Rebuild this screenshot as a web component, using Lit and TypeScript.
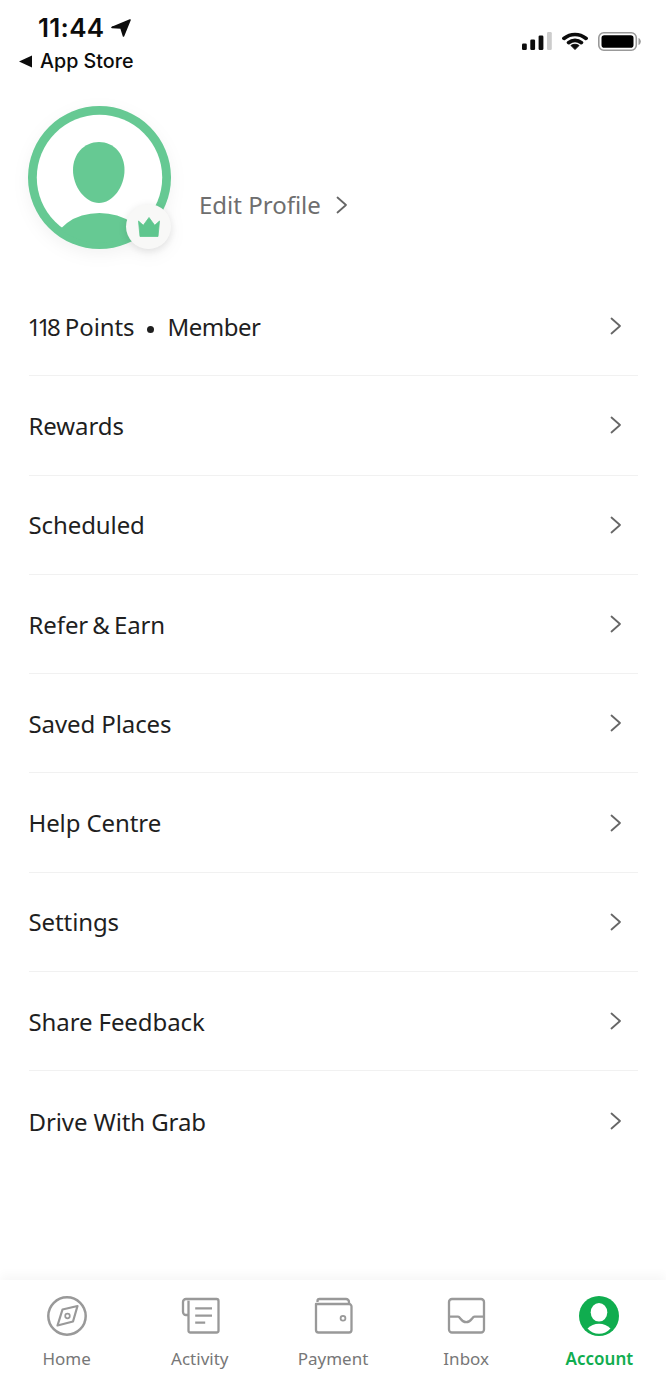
import { LitElement, html, css, svg } from "lit";
import { customElement } from "lit/decorators.js";

const rows = ["Rewards", "Scheduled", "Refer & Earn", "Saved Places", "Help Centre", "Settings", "Share Feedback", "Drive With Grab"];

const chev = html`<svg class="chev" width="12" height="18" viewBox="0 0 12 18"><path d="M1.5 1.5 10 9l-8.500 7.500" fill="none" stroke="#666" stroke-width="1.800" stroke-linecap="round" stroke-linejoin="round"/></svg>`;

const tabIcons: Record<string, unknown> = {
  Home: svg`<circle cx="22" cy="21" r="18.700" fill="none" stroke="#999" stroke-width="2.500"/><path d="M32.500 11 28 26.500 12.500 30.500 17.500 14.500Z" fill="none" stroke="#999" stroke-width="2.200" stroke-linejoin="round"/><circle cx="22.500" cy="21" r="2.300" fill="none" stroke="#999" stroke-width="1.700"/>`,
  Activity: svg`<path d="M9 4H38.500a2 2 0 0 1 2 2V35.500a2 2 0 0 1-2 2H12.500a2 2 0 0 1-2-2V6M10.500 20H8a3 3 0 0 1-3-3V7a3 3 0 0 1 3-3h1a1.500 1.500 0 0 1 1.500 1.500" fill="none" stroke="#999" stroke-width="2.300" stroke-linejoin="round"/><path d="M17.200 13.300H34M17.200 20.700H34M17.200 27.700H27.200" fill="none" stroke="#999" stroke-width="2.300"/>`,
  Payment: svg`<path d="M6.500 7V6a2 2 0 0 1 2-2H35a3 3 0 0 1 3 3V8.500" fill="none" stroke="#999" stroke-width="2.300"/><path d="M5 9H38a2.500 2.500 0 0 1 2.500 2.500V35a2.500 2.500 0 0 1-2.500 2.500H7.500A2.500 2.500 0 0 1 5 35Z" fill="none" stroke="#999" stroke-width="2.300" stroke-linejoin="round"/><circle cx="32" cy="23.300" r="2.400" fill="none" stroke="#999" stroke-width="1.800"/>`,
  Inbox: svg`<rect x="5" y="4" width="35" height="33.500" rx="3" fill="none" stroke="#999" stroke-width="2.300"/><path d="M5 21.700H14c2.500 0 3 5.500 8.200 5.500S28 21.700 30.500 21.700H40" fill="none" stroke="#999" stroke-width="2.300"/>`,
  Account: svg`<circle cx="22" cy="21" r="20" fill="#10ad4f"/><ellipse cx="22" cy="17.300" rx="8.300" ry="9.300" fill="#fff"/><path d="M10.500 33.500c3-3 7-4.700 11.500-4.700s8.500 1.700 11.500 4.700c-3 3.500-7 5.300-11.500 5.300s-8.500-1.800-11.500-5.300Z" fill="#fff"/>`,
};

@customElement("app-root")
export class AppRoot extends LitElement {
  static styles = css`
    :host { display: block; width: 666px; height: 1390px; background: #fff; font-family: "Noto Sans", "Open Sans", sans-serif; overflow: hidden; }
    .page { display: flex; flex-direction: column; height: 1390px; }
    .status { display: flex; justify-content: space-between; height: 106px; box-sizing: border-box; padding: 12px 25px 0 19px; font-family: Inter, sans-serif; color: #0c0c0c; flex: none; }
    .status-left { display: flex; flex-direction: column; }
    .time { display: flex; align-items: center; gap: 7px; padding-left: 19px; font-size: 26px; line-height: 32px; font-weight: 600; letter-spacing: 0.3px; }
    .store { display: flex; align-items: center; gap: 8px; font-size: 19.700px; line-height: 26px; font-weight: 500; margin-top: 4px; }
    .status-right { display: flex; align-items: center; gap: 10px; height: 34px; margin-top: 12px; }
    .profile { display: flex; height: 171px; padding: 0 28px; flex: none; box-sizing: border-box; align-items: flex-start; }
    .avatar { position: relative; width: 143px; height: 143px; flex: none; filter: drop-shadow(0 5px 8px rgba(0,0,0,.05)); }
    .avatar svg.pic { display: block; }
    .badge { position: absolute; right: 0; top: 98px; width: 45px; height: 45px; border-radius: 50%; background: #f8f8f7; box-shadow: 0 2px 8px rgba(0,0,0,.10); display: flex; align-items: center; justify-content: center; }
    .edit { display: flex; align-items: center; gap: 15px; margin: 83px 0 0 28px; font-size: 24px; line-height: 32px; color: #6e6e6e; }
    .list { flex: 1; padding: 0 28px 0 29px; }
    .row { display: flex; align-items: center; justify-content: space-between; height: 99.300px; box-sizing: border-box; border-bottom: 1px solid #f1f1f1; padding: 0 16px 0 0; font-size: 24px; color: #1f1f1f; letter-spacing: -0.1px; }
    .row:last-child { border-bottom: 0; }
    .row .label { margin-left: -0.5px; }
    .row .num { letter-spacing: -4px; margin: 0 2px 0 -1px; }
    .row .member { letter-spacing: -0.5px; }
    .row .amp { word-spacing: -2px; }
    .row .dot { display: inline-block; width: 7px; height: 7px; border-radius: 50%; background: #1f1f1f; margin: 0 13px 0 13px; vertical-align: 3px; }
    .tabs { display: grid; grid-template-columns: repeat(5, 1fr); height: 110px; flex: none; box-shadow: 0 -5px 10px rgba(0,0,0,.035); box-sizing: border-box; background: #fff; padding-top: 1px; position: relative; }
    .tab { display: flex; flex-direction: column; align-items: center; padding-top: 14px; font-size: 17px; line-height: 24px; color: #777; }
    .tab svg { display: block; margin-bottom: 8px; }
    .tab.on { color: #10ad4f; font-weight: 600; }
  `;

  render() {
    return html`<div class="page">
      <div class="status">
        <div class="status-left">
          <div class="time">11:44
            <svg width="20" height="18" viewBox="0 0 20 18"><path d="M19 1 1 8.400 10 9 12.500 17Z" fill="#0c0c0c" stroke="#0c0c0c" stroke-width="1.600" stroke-linejoin="round"/></svg>
          </div>
          <div class="store">
            <svg width="13" height="13" viewBox="0 0 13 13"><path d="M13 .5V12.500L0 6.500Z" fill="#0c0c0c"/></svg>App Store
          </div>
        </div>
        <div class="status-right">
          <svg width="30" height="18" viewBox="0 0 30 18"><rect x="0" y="11.500" width="4.800" height="6.500" rx="1.300" fill="#0c0c0c"/><rect x="8.300" y="7.500" width="4.800" height="10.500" rx="1.300" fill="#0c0c0c"/><rect x="16.600" y="3.500" width="4.800" height="14.500" rx="1.300" fill="#0c0c0c"/><rect x="25" y="0" width="4.800" height="18" rx="1.300" fill="#ccc"/></svg>
          <svg width="26" height="18" viewBox="0 0 27 21" preserveAspectRatio="none"><path d="M2.200 7.500C9 1.500 18 1.500 24.800 7.500M7 12.300C10.800 9 16.200 9 20 12.300" fill="none" stroke="#0c0c0c" stroke-width="4.200" stroke-linecap="round"/><path d="M13.500 20.500 9.300 15.700C11.500 13.800 15.500 13.800 17.700 15.700Z" fill="#0c0c0c" stroke="#0c0c0c" stroke-linejoin="round"/></svg>
          <svg width="43" height="19" viewBox="0 0 43 19"><rect x=".8" y=".8" width="37.500" height="17.400" rx="5" fill="none" stroke="#999" stroke-width="1.600"/><rect x="3.500" y="3.300" width="32" height="12.400" rx="2.800" fill="#000"/><path d="M40.500 6c1.500.5 2.300 2 2.300 3.500s-.8 3-2.300 3.500Z" fill="#999"/></svg>
        </div>
      </div>

      <div class="profile">
        <div class="avatar">
          <svg class="pic" width="143" height="143" viewBox="0 0 143 143">
            <defs><clipPath id="av"><circle cx="71.500" cy="71.500" r="65"/></clipPath></defs>
            <circle cx="71.500" cy="71.500" r="71.500" fill="#66c993"/>
            <circle cx="71.500" cy="71.500" r="62.700" fill="#fff"/>
            <path d="M71 36c15 0 25.500 12 25.500 28 0 17-12 33-25.500 33S45 81 45 64c0-16 11-28 26-28Z" fill="#66c993"/>
            <g clip-path="url(#av)"><ellipse cx="71.500" cy="141" rx="46" ry="34" fill="#66c993"/><rect x="0" y="128" width="143" height="15" fill="#66c993"/></g>
          </svg>
          <div class="badge">
            <svg width="22" height="20" viewBox="0 0 22 20"><path d="M0.500 4 5.300 8.300 11 .5 16.700 8.300 21.500 4 20 19.500H2Z" fill="#5fc68e" stroke="#5fc68e" stroke-width=".8" stroke-linejoin="round"/></svg>
          </div>
        </div>
        <div class="edit">Edit Profile ${chev}</div>
      </div>

      <div class="list">
        <div class="row"><span class="label"><span class="num">118</span> Points<span class="dot"></span><span class="member">Member</span></span>${chev}</div>
        ${rows.map((r) => html`<div class="row"><span class="label ${r.includes("&") ? "amp" : ""}">${r}</span>${chev}</div>`)}
      </div>

      <div class="tabs">
        ${Object.keys(tabIcons).map(
          (k) => html`<div class="tab ${k === "Account" ? "on" : ""}"><svg width="44" height="44" viewBox="0 0 44 44">${tabIcons[k]}</svg>${k}</div>`
        )}
      </div>
    </div>`;
  }
}
